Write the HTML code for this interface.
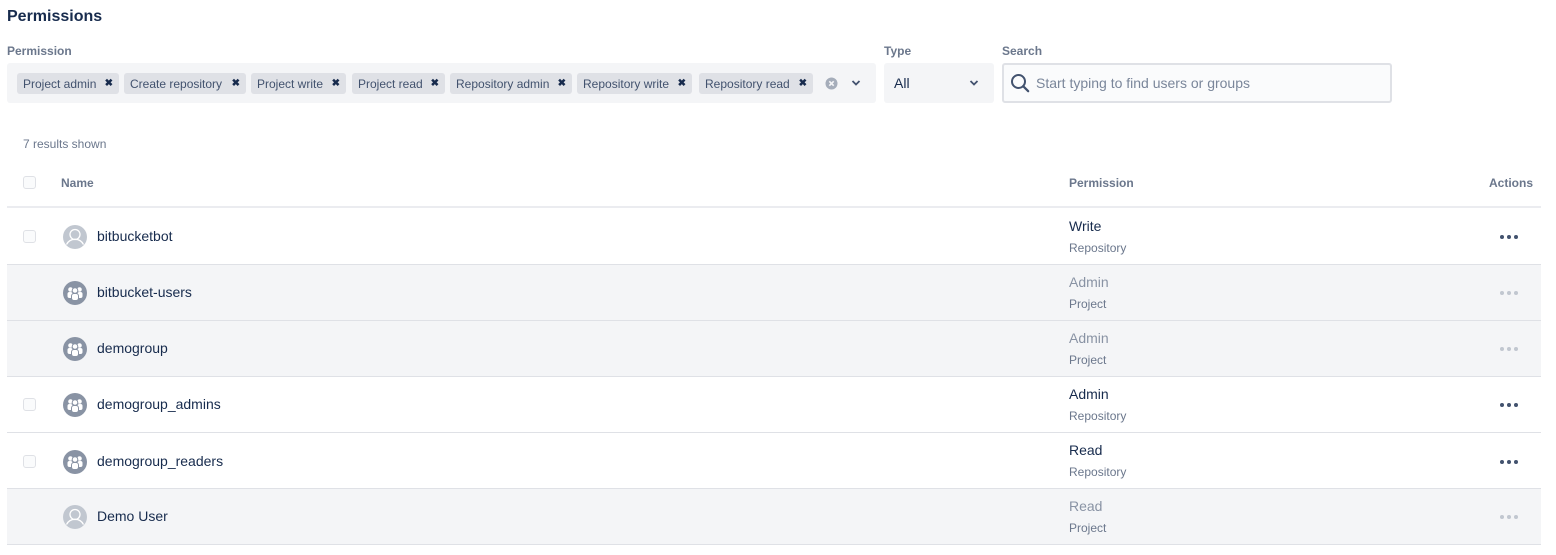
<!DOCTYPE html>
<html><head><meta charset="utf-8"><style>
*{box-sizing:border-box;margin:0;padding:0}
body{width:1556px;height:555px;background:#fff;font-family:"Liberation Sans",sans-serif;color:#172b4d;position:relative;overflow:hidden}
.a{position:absolute}
.lbl{font-size:12px;font-weight:bold;color:#6b778c}
.box{background:#f4f5f7;border-radius:3px}
.chip{position:absolute;top:73px;height:21px;background:#dfe1e6;border-radius:3px;font-size:12px;color:#42526e;line-height:22px;padding-left:6px}
.chip b{position:absolute;right:6px;top:0;font-size:10px;color:#172b4d}
.row{position:absolute;left:7px;width:1534px;height:56px;border-bottom:1px solid #dfe1e6}
.row.g{background:#f4f5f7}
.cb{position:absolute;left:16px;width:13px;height:13px;border:1.5px solid #dfe1e6;border-radius:3px;background:#fafbfc}
.nm{position:absolute;left:90px;font-size:14px;top:19px}
.p1{position:absolute;left:1062px;top:9px;font-size:14px}
.p2{position:absolute;left:1062px;top:32px;font-size:12px;color:#6b778c}
.dots{position:absolute;left:1493px;top:26px;width:20px;height:4px}
.dots i{position:absolute;top:0;width:4px;height:4px;border-radius:2px;background:#42526e}
.ic{position:absolute;left:56px;top:16px;width:24px;height:24px}
</style></head><body>
<div class="a" style="left:7px;top:8px;font-size:16px;font-weight:bold;color:#172b4d">Permissions</div>
<div class="a lbl" style="left:7px;top:44px">Permission</div>
<div class="a lbl" style="left:884px;top:44px">Type</div>
<div class="a lbl" style="left:1002px;top:44px">Search</div>
<div class="a box" style="left:7px;top:63px;width:869px;height:40px"></div>
<div class="chip" style="left:17px;width:102px">Project admin<b>✖</b></div>
<div class="chip" style="left:124px;width:122px">Create repository<b>✖</b></div>
<div class="chip" style="left:251px;width:95px">Project write<b>✖</b></div>
<div class="chip" style="left:352px;width:93px">Project read<b>✖</b></div>
<div class="chip" style="left:450px;width:122px">Repository admin<b>✖</b></div>
<div class="chip" style="left:577px;width:115px">Repository write<b>✖</b></div>
<div class="chip" style="left:699px;width:114px">Repository read<b>✖</b></div>
<svg class="a" style="left:825px;top:77px" width="13" height="13" viewBox="0 0 13 13"><circle cx="6.5" cy="6.5" r="6" fill="#a5adba"/><path d="M4.3 4.3l4.4 4.4M8.7 4.3l-4.4 4.4" stroke="#f4f5f7" stroke-width="1.6"/></svg>
<svg class="a" style="left:851px;top:79px" width="10" height="8" viewBox="0 0 10 8"><path d="M1.5 2l3.5 3.5L8.5 2" stroke="#42526e" stroke-width="1.8" fill="none"/></svg>
<div class="a box" style="left:884px;top:63px;width:110px;height:40px"></div>
<div class="a" style="left:894px;top:75px;font-size:14px">All</div>
<svg class="a" style="left:969px;top:79px" width="10" height="8" viewBox="0 0 10 8"><path d="M1.5 2l3.5 3.5L8.5 2" stroke="#42526e" stroke-width="1.8" fill="none"/></svg>
<div class="a" style="left:1002px;top:63px;width:390px;height:40px;border:2px solid #dfe1e6;border-radius:3px;background:#fafbfc"></div>
<svg class="a" style="left:1010px;top:73px" width="20" height="20" viewBox="0 0 20 20"><circle cx="8.5" cy="8.5" r="6.5" stroke="#42526e" stroke-width="2" fill="none"/><path d="M13.2 13.2l5 5" stroke="#42526e" stroke-width="2.2" stroke-linecap="round"/></svg>
<div class="a" style="left:1036px;top:75px;font-size:14px;color:#7a869a">Start typing to find users or groups</div>
<div class="a" style="left:23px;top:137px;font-size:12px;color:#6b778c">7 results shown</div>
<div class="cb" style="left:23px;top:176px"></div>
<div class="a lbl" style="left:61px;top:176px">Name</div>
<div class="a lbl" style="left:1069px;top:176px">Permission</div>
<div class="a lbl" style="left:1489px;top:176px">Actions</div>
<div class="a" style="left:7px;top:206px;width:1534px;height:2px;background:#ebecf0"></div>

<div class="row" style="top:209px"><div class="cb" style="top:21px"></div>
<svg class="ic" viewBox="0 0 24 24"><circle cx="12" cy="12" r="12" fill="#c1c7d0"/><circle cx="12" cy="9.5" r="5" fill="#c1c7d0" stroke="#fff" stroke-width="1.3"/><path d="M3.5 19.5c2-4 5-5.2 8.5-5.2s6.5 1.2 8.5 5.2" fill="none" stroke="#fff" stroke-width="1.3"/></svg>
<div class="nm">bitbucketbot</div><div class="p1">Write</div><div class="p2">Repository</div><div class="dots"><i style="left:0"></i><i style="left:7px"></i><i style="left:14px"></i></div></div>

<div class="row g" style="top:265px">
<svg class="ic" viewBox="0 0 24 24"><circle cx="12" cy="12" r="12" fill="#8993a4"/><circle cx="7.5" cy="8.5" r="2.3" fill="#fff"/><circle cx="16.5" cy="8.5" r="2.3" fill="#fff"/><circle cx="12" cy="9.5" r="2.8" fill="#fff" stroke="#8993a4"/><rect x="4.5" y="11" width="5" height="6" rx="2" fill="#fff"/><rect x="14.5" y="11" width="5" height="6" rx="2" fill="#fff"/><rect x="8.5" y="12.5" width="7" height="7" rx="2.5" fill="#fff" stroke="#8993a4"/></svg>
<div class="nm">bitbucket-users</div><div class="p1" style="color:#8993a4">Admin</div><div class="p2">Project</div><div class="dots"><i style="left:0;background:#c1c7d0"></i><i style="left:7px;background:#c1c7d0"></i><i style="left:14px;background:#c1c7d0"></i></div></div>

<div class="row g" style="top:321px">
<svg class="ic" viewBox="0 0 24 24"><circle cx="12" cy="12" r="12" fill="#8993a4"/><circle cx="7.5" cy="8.5" r="2.3" fill="#fff"/><circle cx="16.5" cy="8.5" r="2.3" fill="#fff"/><circle cx="12" cy="9.5" r="2.8" fill="#fff" stroke="#8993a4"/><rect x="4.5" y="11" width="5" height="6" rx="2" fill="#fff"/><rect x="14.5" y="11" width="5" height="6" rx="2" fill="#fff"/><rect x="8.5" y="12.5" width="7" height="7" rx="2.5" fill="#fff" stroke="#8993a4"/></svg>
<div class="nm">demogroup</div><div class="p1" style="color:#8993a4">Admin</div><div class="p2">Project</div><div class="dots"><i style="left:0;background:#c1c7d0"></i><i style="left:7px;background:#c1c7d0"></i><i style="left:14px;background:#c1c7d0"></i></div></div>

<div class="row" style="top:377px"><div class="cb" style="top:21px"></div>
<svg class="ic" viewBox="0 0 24 24"><circle cx="12" cy="12" r="12" fill="#8993a4"/><circle cx="7.5" cy="8.5" r="2.3" fill="#fff"/><circle cx="16.5" cy="8.5" r="2.3" fill="#fff"/><circle cx="12" cy="9.5" r="2.8" fill="#fff" stroke="#8993a4"/><rect x="4.5" y="11" width="5" height="6" rx="2" fill="#fff"/><rect x="14.5" y="11" width="5" height="6" rx="2" fill="#fff"/><rect x="8.5" y="12.5" width="7" height="7" rx="2.5" fill="#fff" stroke="#8993a4"/></svg>
<div class="nm">demogroup_admins</div><div class="p1">Admin</div><div class="p2">Repository</div><div class="dots"><i style="left:0"></i><i style="left:7px"></i><i style="left:14px"></i></div></div>

<div class="row" style="top:433px"><div class="cb" style="top:22px"></div>
<svg class="ic" style="top:17px" viewBox="0 0 24 24"><circle cx="12" cy="12" r="12" fill="#8993a4"/><circle cx="7.5" cy="8.5" r="2.3" fill="#fff"/><circle cx="16.5" cy="8.5" r="2.3" fill="#fff"/><circle cx="12" cy="9.5" r="2.8" fill="#fff" stroke="#8993a4"/><rect x="4.5" y="11" width="5" height="6" rx="2" fill="#fff"/><rect x="14.5" y="11" width="5" height="6" rx="2" fill="#fff"/><rect x="8.5" y="12.5" width="7" height="7" rx="2.5" fill="#fff" stroke="#8993a4"/></svg>
<div class="nm" style="top:20px">demogroup_readers</div><div class="p1">Read</div><div class="p2">Repository</div><div class="dots" style="top:27px"><i style="left:0"></i><i style="left:7px"></i><i style="left:14px"></i></div></div>

<div class="row g" style="top:489px">
<svg class="ic" viewBox="0 0 24 24"><circle cx="12" cy="12" r="12" fill="#c1c7d0"/><circle cx="12" cy="9.5" r="5" fill="#c1c7d0" stroke="#fff" stroke-width="1.3"/><path d="M3.5 19.5c2-4 5-5.2 8.5-5.2s6.5 1.2 8.5 5.2" fill="none" stroke="#fff" stroke-width="1.3"/></svg>
<div class="nm">Demo User</div><div class="p1" style="color:#8993a4">Read</div><div class="p2">Project</div><div class="dots"><i style="left:0;background:#c1c7d0"></i><i style="left:7px;background:#c1c7d0"></i><i style="left:14px;background:#c1c7d0"></i></div></div>
</body></html>
